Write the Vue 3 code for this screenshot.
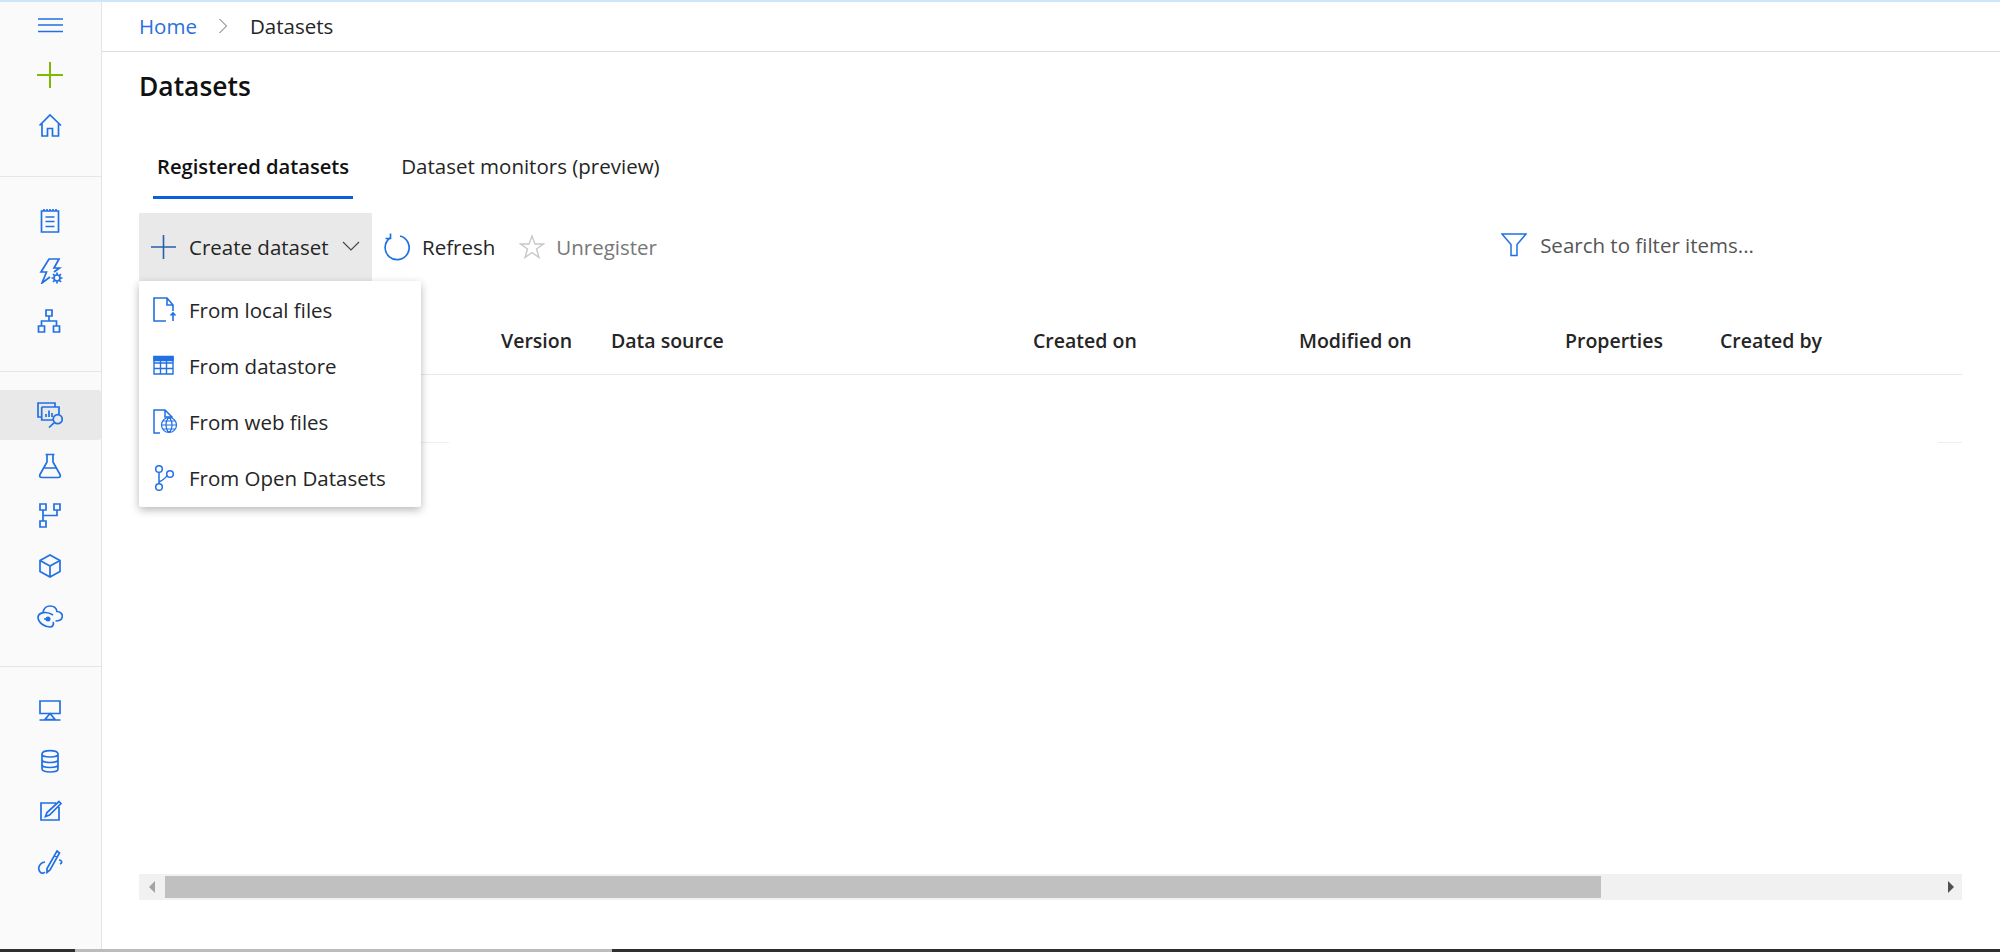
<script setup>
const groups = [
  [
    { d: 'M1 19.5H26 M1 13H26 M1 7H26', w: 1.5 },
    { d: 'M0 13H26 M13 0V26', w: 2, color: '#7fba00' },
    { d: 'M2.5 13.5L13 3L24 13.5 M5 11.5V24H10.5V16.5H15.5V24H21.5V11.5' },
  ],
  [
    { d: 'M4.5 3H21.5V24H4.5Z M7 1V3 M10 1V3 M13 1V3 M16 1V3 M19 1V3 M8.5 9H17.5 M8.5 13.5H17.5 M8.5 18.5H17.5' },
    { d: 'M17 14L22.5 10H17L22 1H12L4 14H9.5L5 25L13 19 M20 17A3 3 0 1 0 20 23A3 3 0 1 0 20 17 M20 14.5V17 M20 23V25.5 M14.5 20H17 M23 20H25.5 M16 16L17.8 17.8 M24 16L22.2 17.8 M16 24L17.8 22.2 M24 24L22.2 22.2' },
    { d: 'M9 2H15V8H9Z M1.5 18H7.5V24H1.5Z M16.5 18H22.5V24H16.5Z M12 8V13 M4.5 18V13H19.5V18' },
  ],
  [
    { d: 'M4.7 15H1V1H18V5 M4.7 5H22V12 M4.7 5V18H16 M9 15V12 M12 15V8.5 M15 15V11 M17.5 20.3A4.5 4.5 0 1 0 24 14A4.5 4.5 0 1 0 17.5 20.3 M17.5 20.3L12 25.5', active: true },
    { d: 'M8.5 1.5H17.5 M10 1.5V9L3 21.5C2 23.5 3 24.5 5 24.5H21C23 24.5 24 23.5 23 21.5L16 9V1.5 M7 15H19' },
    { d: 'M3 1H9V7H3Z M17 1H23V7H17Z M3 18H9V24H3Z M6 7V18 M20 7V12.5H6' },
    { d: 'M13 2L23 7.5V18.5L13 24L3 18.5V7.5Z M3 7.5L13 13L23 7.5 M13 13V24' },
    { d: 'M6 9C7 5 10 3 13 3C17 3 19.5 5.5 20 8.5C23.5 8.5 25.5 11 25.3 13.5C25 16.5 22.5 18 18.5 18 M16 12C10 8 2 9 1 14C1 20 8 24 13 24C16 24 17 21 16 19 M7 16H11', dot: true },
  ],
  [
    { d: 'M3 3H23V15.5H3Z M13 15.5L8 21.5H18Z M2.5 22H23.5' },
    { d: 'M5 6C5 1.5 21 1.5 21 6V21C21 25 5 25 5 21Z M5 6C5 10 21 10 21 6 M5 11.5C5 15.5 21 15.5 21 11.5 M5 16.5C5 20.5 21 20.5 21 16.5' },
    { d: 'M19 5H4V22H22V9 M22 3.5L24 5.5L12.5 17L8.5 18.5L10 14.5Z' },
    { d: 'M20 3L22.5 5L13 22L10 24.5L10 20.5Z M17.5 7.5L20.5 9.5 M8 14C2 15 0 21 3.5 24.5C5 25.5 7 25 8 24 M22 12C25 12 25.5 15 23 16' },
  ],
]
const columns = ['', 'Version', 'Data source', 'Created on', 'Modified on', 'Properties', 'Created by']
</script>

<template>
  <div class="page">
    <div class="top-strip"></div>
    <div class="body">
      <nav class="rail">
        <div v-for="(group, g) in groups" :key="g" class="rail-group">
          <div v-for="(icon, i) in group" :key="i" class="rail-item" :class="{ active: icon.active }">
            <svg width="26" height="26" viewBox="0 0 26 26" fill="none" :stroke="icon.color || '#2170e4'" :stroke-width="icon.w || 1.7">
              <path :d="icon.d" />
              <circle v-if="icon.dot" cx="11" cy="16" r="2.5" fill="#2170e4" stroke="none" />
            </svg>
          </div>
        </div>
      </nav>

      <main class="main">
        <div class="crumbs">
          <span class="home">Home</span>
          <svg width="10" height="16" viewBox="0 0 10 16" fill="none" stroke="#666" stroke-width="1"><path d="M1.5 1L8.5 8L1.5 15" /></svg>
          <span>Datasets</span>
        </div>
        <div class="content">
          <h1>Datasets</h1>
          <div class="tabs">
            <div class="tab selected">Registered datasets</div>
            <div class="tab">Dataset monitors (preview)</div>
          </div>

          <div class="toolbar">
            <div class="create-wrap">
              <div class="create">
                <svg width="26" height="26" viewBox="0 0 26 26" fill="none" stroke="#2a5ea8" stroke-width="1.6"><path d="M0 13H25 M12.5 1V25" /></svg>
                <span>Create dataset</span>
                <svg class="chev" width="18" height="10" viewBox="0 0 18 10" fill="none" stroke="#444" stroke-width="1.1"><path d="M1 1L9 9L17 1" /></svg>
              </div>
              <div class="menu">
                <div class="menu-item">
                  <svg width="26" height="26" viewBox="0 0 26 26" fill="none" stroke="#2170e4" stroke-width="1.6"><path d="M13 24H1V1H14L20 8V14 M14 1V8H20 M20 24V16 M17.5 18.5L20 16L22.5 18.5" /></svg>
                  <span>From local files</span>
                </div>
                <div class="menu-item">
                  <svg width="26" height="26" viewBox="0 0 26 26" fill="none" stroke="#2170e4" stroke-width="1.4"><path d="M1 4H20V21H1Z M1 10H20 M1 15.5H20 M7.5 4V21 M13.5 4V21" /><path d="M1 3.5H20V7.5H1Z" fill="#2170e4" /></svg>
                  <span>From datastore</span>
                </div>
                <div class="menu-item">
                  <svg width="26" height="26" viewBox="0 0 26 26" fill="none" stroke="#2170e4" stroke-width="1.5"><path d="M7 24H1V1H12L19 8V9 M12 1V8H19" /><path d="M16 8.5A7.5 7.5 0 1 0 16 23.5A7.5 7.5 0 1 0 16 8.5Z M8.5 16H23.5 M16 8.5C12 12 12 20 16 23.5C20 20 20 12 16 8.5 M10 12H22 M10 20H22" fill="#fff" stroke-width="1.2" /></svg>
                  <span>From web files</span>
                </div>
                <div class="menu-item">
                  <svg width="26" height="26" viewBox="0 0 26 26" fill="none" stroke="#2170e4" stroke-width="1.5"><circle cx="6" cy="4" r="3.3" /><circle cx="6" cy="22" r="3.3" /><circle cx="17" cy="9" r="3.3" /><path d="M6 7.3V18.7 M14 10.5C12 14 9 15.5 6 17" /></svg>
                  <span>From Open Datasets</span>
                </div>
              </div>
            </div>

            <div class="action">
              <svg width="28" height="28" viewBox="0 0 28 28" fill="none" stroke="#2170e4" stroke-width="1.7"><path d="M17 3A12 12 0 1 1 7 5 M7.5 0.5V5.5H2.5" /></svg>
              <span>Refresh</span>
            </div>
            <div class="action disabled">
              <svg width="26" height="26" viewBox="0 0 26 26" fill="none" stroke="#c8c8c8" stroke-width="1.4"><path d="M13 2L16 10H24.5L17.5 15L20 23.5L13 18.5L6 23.5L8.5 15L1.5 10H10Z" /></svg>
              <span>Unregister</span>
            </div>
            <div class="search">
              <svg width="26" height="24" viewBox="0 0 26 24" fill="none" stroke="#2170e4" stroke-width="1.5"><path d="M1 1H25L16 11.5V22.5H10V11.5Z" /></svg>
              <span>Search to filter items...</span>
            </div>
          </div>

          <div class="table-head">
            <div v-for="(column, c) in columns" :key="c">{{ column }}</div>
          </div>
          <div class="empty-row">
            <i class="seg left"></i>
            <i class="seg right"></i>
          </div>

          <div class="scroll">
            <div class="arrow"><b class="tri back"></b></div>
            <div class="thumb"></div>
            <div class="rest"><b class="tri fwd"></b></div>
          </div>
        </div>
      </main>
    </div>
    <div class="bottom-strip">
      <i class="dark first"></i>
      <i class="grey"></i>
      <i class="dark last"></i>
    </div>
  </div>
</template>

<style>
html, body { margin: 0; height: 100%; overflow: hidden; background: #fff; }
</style>

<style scoped>
.page {
  width: 2000px;
  height: 952px;
  display: flex;
  flex-direction: column;
  font-family: "Open Sans", "Noto Sans", sans-serif;
  font-size: 20.5px;
  color: #252525;
}
.top-strip { height: 2px; background: #cfe6f8; flex: none; }
.body { flex: 1; display: flex; min-height: 0; }
.bottom-strip { height: 3px; flex: none; display: flex; }
.dark { background: #2f2f2f; }
.first { width: 75px; }
.grey { width: 537px; background: #bcbcbc; }
.last { flex: 1; }

.rail {
  width: 101px;
  flex: none;
  background: #fafafa;
  border-right: 1px solid #e4e4e4;
}
.rail-group { border-bottom: 1px solid #e6e6e6; padding: 19px 0 25px; }
.rail-group:first-child { padding: 0 0 26px; margin-top: -2px; }
.rail-group:nth-child(3) { padding: 18px 0 25px; }
.rail-group:last-child { border-bottom: 0; }
.rail-item {
  height: 50px;
  display: flex;
  align-items: center;
  justify-content: center;
  padding-right: 1px;
  box-sizing: border-box;
}
.rail-item.active { background: #e9e9e9; border-radius: 0 3px 3px 0; margin-bottom: 1px; }

.main { flex: 1; min-width: 0; display: flex; flex-direction: column; }
.crumbs {
  height: 50px;
  flex: none;
  box-sizing: border-box;
  border-bottom: 1px solid #dedede;
  padding: 0 0 2px 37px;
  display: flex;
  align-items: center;
}
.crumbs svg { margin: 0 22px 0 21px; }
.home { color: #2b6fde; }

.content { padding: 0 38px 0 37px; }
h1 {
  margin: 0;
  padding-top: 18px;
  height: 46px;
  font-size: 26.4px;
  line-height: 32px;
  font-weight: 600;
  color: #111;
}
.tabs { margin-top: 33px; display: flex; }
.tab {
  height: 47px;
  margin-left: 14px;
  margin-right: 30px;
  padding: 0 4px;
  line-height: 34px;
  border-bottom: 3px solid transparent;
}
.tab.selected { font-size: 20.2px; font-weight: 600; color: #111; border-bottom-color: #0a5fdc; }

.toolbar { margin-top: 14px; display: flex; align-items: flex-start; height: 68px; }
.create-wrap { position: relative; }
.create {
  width: 233px;
  height: 68px;
  box-sizing: border-box;
  background: #e9e9e9;
  display: flex;
  align-items: center;
  padding-left: 12px;
}
.create span { margin-left: 12px; }
.chev { margin-left: 13px; margin-top: -2px; }
.menu {
  position: absolute;
  z-index: 2;
  top: 68px;
  left: 0;
  width: 282px;
  height: 226px;
  padding-top: 1px;
  box-sizing: border-box;
  background: #fff;
  border-radius: 2px;
  box-shadow: 0 3px 8px rgba(0, 0, 0, 0.28);
}
.menu-item { height: 56px; display: flex; align-items: center; padding-left: 14px; }
.menu-item span { margin-left: 10px; }
.action { display: flex; align-items: center; height: 68px; }
.action span { margin-left: 11px; }
.action:nth-child(2) { margin-left: 11px; }
.action.disabled { color: #777; margin-left: 24px; }
.search { margin-left: auto; margin-right: 208px; height: 64px; display: flex; align-items: center; color: #555; }
.search span { margin-left: 13px; }

.table-head {
  margin-top: 26px;
  height: 68px;
  box-sizing: border-box;
  display: grid;
  grid-template-columns: 362px 110px 422px 266px 266px 155px 1fr;
  align-items: center;
  font-size: 19.5px;
  font-weight: 600;
  border-bottom: 1px solid #e8e8e8;
}
.empty-row { height: 68px; display: flex; justify-content: space-between; align-items: flex-end; }
.seg { height: 1px; background: #eeeeee; display: block; }
.seg.left { width: 310px; }
.seg.right { width: 24px; }

.scroll {
  margin-top: 431px;
  height: 26px;
  background: #f1f1f1;
  display: flex;
  align-items: center;
}
.arrow { width: 26px; display: flex; justify-content: center; }
.thumb { width: 1436px; height: 22px; background: #c0c0c0; }
.rest { flex: 1; display: flex; justify-content: flex-end; padding-right: 8px; }
.tri { width: 0; height: 0; border-top: 6px solid transparent; border-bottom: 6px solid transparent; }
.tri.back { border-right: 6px solid #a3a3a3; }
.tri.fwd { border-left: 6px solid #505050; }
</style>
